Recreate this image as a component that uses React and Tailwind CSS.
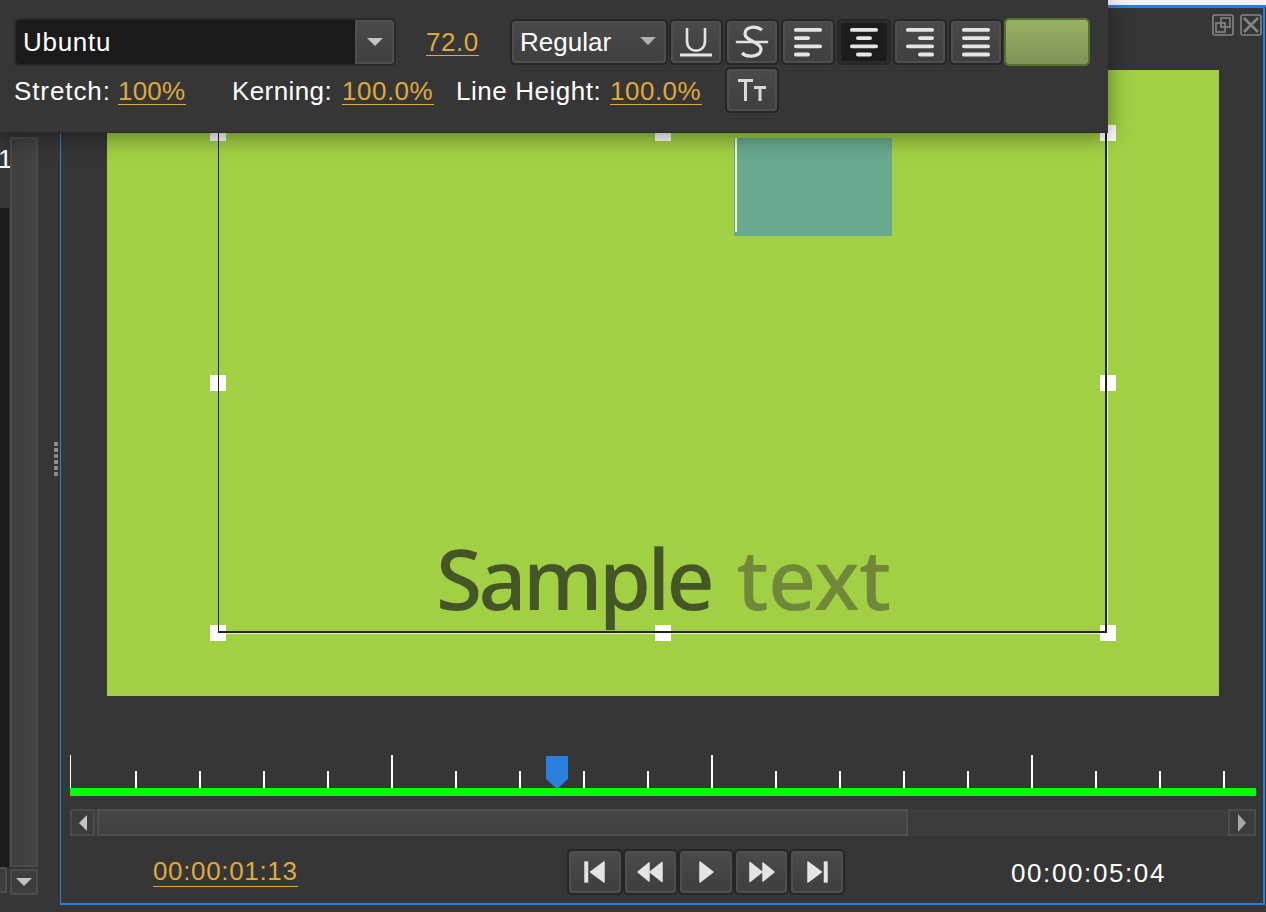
import React from "react";

const F = { fontFamily: '"Liberation Sans", Arial, sans-serif' };

function Btn({ className = "", children }) {
  return (
    <div className={"w-[54px] h-[46px] rounded-[5px] border-[2px] border-[#262626] flex items-center justify-center shrink-0 " + className}>
      {children}
    </div>
  );
}

function Face({ children, dark }) {
  return (
    <div className={"w-full h-full rounded-[4px] border-[2px] flex items-center justify-center " + (dark ? "border-[#2c2c2c] bg-[#1c1c1c]" : "border-[#4f4f4f] bg-gradient-to-b from-[#4a4a4a] to-[#3f3f3f]")}>
      {children}
    </div>
  );
}

function AlignIcon({ widths, align }) {
  const x = (w) => (align === "l" ? 2 : align === "r" ? 30 - w : 16 - w / 2);
  return (
    <svg width="32" height="32" viewBox="0 0 32 32" fill="#e4e4e4">
      {widths.map((w, i) => (
        <rect key={i} x={x(w)} y={2 + i * 8.2} width={w} height="3.8" rx="1.9" />
      ))}
    </svg>
  );
}

function Gold({ children, className = "" }) {
  return <span className={"text-[#dfa93b] border-b border-[#dfa93b] leading-[26px] " + className}>{children}</span>;
}

function Handle({ className }) {
  return <div className={"absolute bg-white " + className} />;
}

function Transport({ children }) {
  return (
    <div className="w-[55.6px] h-[46px] rounded-[5px] border-[2px] border-[#262626] shrink-0">
      <div className="w-full h-full rounded-[4px] border-[2px] border-[#4f4f4f] bg-gradient-to-b from-[#4a4a4a] to-[#3f3f3f] flex items-center justify-center">
        <svg width="28" height="26" viewBox="0 0 28 26" fill="#e4e4e4" stroke="#e4e4e4" strokeWidth="1.5" strokeLinejoin="round">{children}</svg>
      </div>
    </div>
  );
}

const minor = [0, 1, 2, 3, 4, 5, 6, 7, 8, 9, 10, 11, 12, 13, 14, 15, 16, 17, 18, 19];

export default function App() {
  return (
    <div className="relative w-[1266px] h-[912px] overflow-hidden bg-[#363636] text-white" style={F}>
      {/* top-right strip */}
      <div className="absolute left-[1108px] right-0 top-0 h-[7px] bg-[#f4f4f8] border-b-[2px] border-[#2a7fd9]" />

      {/* left dock strip */}
      <div className="absolute left-[-2px] top-[146px] text-[26px] leading-[26px]">1</div>
      <div className="absolute left-0 top-[208px] w-[9px] h-[660px] bg-[#1b1b1b]" />
      <div className="absolute left-0 top-[867px] w-[7px] h-[26px] bg-[#3d3d3d] border-[2px] border-l-0 border-[#4b4b4b]" />
      <div className="absolute left-[10px] top-[137px] w-[28px] h-[730px] border-[2px] border-[#4b4b4b] bg-gradient-to-r from-[#3e3e3e] to-[#444444]" />
      <div className="absolute left-[10px] top-[869px] w-[28px] h-[26px] border-[2px] border-[#4b4b4b] bg-[#3d3d3d] flex items-center justify-center">
        <div className="w-0 h-0 border-l-[8px] border-r-[8px] border-t-[8px] border-l-transparent border-r-transparent border-t-[#c4c4c4]" />
      </div>

      {/* grip */}
      <div className="absolute left-[54px] top-[442px] w-[4px] flex flex-col gap-[2px]">
        {[0, 1, 2, 3, 4, 5].map((i) => (
          <div key={i} className="w-[4px] h-[4px] bg-[#8a8a8a]" />
        ))}
      </div>

      {/* monitor panel */}
      <div className="absolute left-[60px] top-[6px] w-[1205px] h-[899px] border-[2px] border-l-[1px] border-[#2a7fd9]">
        {/* dock buttons */}
        <div className="absolute right-[1px] top-[6px] flex gap-[6px]">
          <svg width="22" height="22" viewBox="0 0 22 22" fill="none" stroke="#858585" strokeWidth="1.6">
            <rect x="1" y="1" width="20" height="20" rx="2" />
            <rect x="9" y="4" width="9" height="9" />
            <rect x="4" y="9" width="9" height="9" />
          </svg>
          <svg width="22" height="22" viewBox="0 0 22 22" fill="none" stroke="#858585" strokeWidth="1.6">
            <rect x="1" y="1" width="20" height="20" rx="2" />
            <path d="M4 4 L18 18 M18 4 L4 18" strokeWidth="2.6" />
          </svg>
        </div>
      </div>

      {/* video frame */}
      <div className="absolute left-[107px] top-[70px] w-[1112px] h-[626px] bg-[#a2d044]">
        <div className="absolute left-[627px] top-[68px] w-[158px] h-[98px] bg-[#69a98f]">
          <div className="absolute left-[1px] top-0 w-[2px] h-[94px] bg-[#fdfdc0]" />
        </div>
        <div
          className="absolute left-[329px] top-[458px] text-[84px] leading-[100px] font-medium whitespace-nowrap text-[#465526] blur-[0.5px]"
          style={{ fontFamily: '"Noto Sans", sans-serif', letterSpacing: "-3.6px", wordSpacing: "7px" }}
        >
          Sample <span className="text-[#71883a]" style={{ letterSpacing: "-0.6px" }}>text</span>
        </div>
        <Handle className="left-[103px] top-[55px] w-[16px] h-[16px]" />
        <Handle className="left-[548px] top-[55px] w-[16px] h-[16px]" />
        <Handle className="left-[993px] top-[55px] w-[16px] h-[16px]" />
        <Handle className="left-[103px] top-[305px] w-[16px] h-[16px]" />
        <Handle className="left-[993px] top-[305px] w-[16px] h-[16px]" />
        <Handle className="left-[103px] top-[555px] w-[16px] h-[16px]" />
        <Handle className="left-[548px] top-[555px] w-[16px] h-[16px]" />
        <Handle className="left-[993px] top-[555px] w-[16px] h-[16px]" />
        {/* selection rectangle */}
        <div className="absolute left-[111px] top-[60px] w-[889px] h-[503px] border-[1px] border-[#222] border-b-[2px] border-r-[2px] shadow-[1px_1px_0_rgba(255,255,255,0.7)]" />
      </div>

      {/* ruler */}
      <div className="absolute left-[70px] top-[755px] w-[1186px] h-[41px]">
        {minor.map((i) => (
          <div
            key={i}
            className={"absolute bottom-[8px] bg-white " + (i % 5 === 0 ? "h-[33px]" : "h-[17px]") + (i === 0 ? " w-[1px]" : " w-[2px]")}
            style={{ left: i === 0 ? 0 : i * 64 + 1 }}
          />
        ))}
        <div className="absolute left-0 right-0 bottom-0 h-[8px] bg-[#00ff00]" />
        <svg className="absolute left-[475px] top-[1px]" width="24" height="33" viewBox="0 0 24 33" fill="#2a80dc">
          <path d="M1 0 H23 V23 L12 33 L1 23 Z" />
        </svg>
      </div>

      {/* scrollbar */}
      <div className="absolute left-[70px] top-[809px] w-[1186px] h-[27px] flex bg-[#3c3c3c]">
        <div className="w-[25px] h-full border-[2px] border-[#4b4b4b] flex items-center justify-center shrink-0">
          <div className="w-0 h-0 border-t-[8px] border-b-[8px] border-r-[8px] border-t-transparent border-b-transparent border-r-[#c4c4c4]" />
        </div>
        <div className="ml-[2px] w-[811px] h-full border-[2px] border-[#4f4f4f] bg-gradient-to-b from-[#464646] to-[#404040]" />
        <div className="flex-1" />
        <div className="w-[28px] h-full border-[2px] border-[#4b4b4b] flex items-center justify-center shrink-0">
          <div className="w-0 h-0 border-t-[9px] border-b-[9px] border-l-[8px] border-t-transparent border-b-transparent border-l-[#a8a8a8]" />
        </div>
      </div>

      {/* transport */}
      <div className="absolute left-[153px] top-[858px] text-[26px] leading-[26px] tracking-[0.65px]">
        <Gold>00:00:01:13</Gold>
      </div>
      <div className="absolute left-[567px] top-[849px] flex">
        <Transport><rect x="4" y="3" width="2.5" height="20" /><path d="M9.5 13 L23 3 V23 Z" /></Transport>
        <Transport><path d="M2 13 L13 4 V22 Z" /><path d="M14 13 L26 3.5 V22.5 Z" /></Transport>
        <Transport><path d="M8 3 L21 13 L8 23 Z" /></Transport>
        <Transport><path d="M2 3.5 L14 13 L2 22.5 Z" /><path d="M15 4 L26 13 L15 22 Z" /></Transport>
        <Transport><path d="M5 3 L18.5 13 L5 23 Z" /><rect x="21.5" y="3" width="2.5" height="20" /></Transport>
      </div>
      <div className="absolute left-[1011px] top-[860px] text-[26px] leading-[26px] tracking-[1.6px]">00:00:05:04</div>

      {/* text toolbar overlay */}
      <div className="absolute left-0 top-0 w-[1108px] h-[133px] bg-[#363636] border-b border-[#2a2a2a] shadow-[0_3px_22px_rgba(0,0,0,0.45)] pt-[18px] pl-[14px] text-[26px]">
        <div className="flex items-center h-[48px]">
          <div className="w-[382px] h-[48px] rounded-[5px] border-[2px] border-[#2a2a2a] flex overflow-hidden">
            <div className="w-[339px] bg-[#1a1a1a] pl-[7px] leading-[44px] tracking-[0.7px]">Ubuntu</div>
            <div className="flex-1 rounded-r-[4px] border-[2px] border-[#4f4f4f] bg-gradient-to-b from-[#4a4a4a] to-[#3f3f3f] flex items-center justify-center">
              <div className="w-0 h-0 border-l-[8px] border-r-[8px] border-t-[8px] border-l-transparent border-r-transparent border-t-[#c4c4c4]" />
            </div>
          </div>
          <div className="ml-[30px] w-[84px] flex tracking-[0.5px]">
            <Gold>72.0</Gold>
          </div>
          <Btn className="!w-[158px]">
            <div className="w-full h-full rounded-[4px] border-[2px] border-[#4f4f4f] bg-gradient-to-b from-[#4a4a4a] to-[#3f3f3f] flex items-center justify-between pl-[6px] pr-[8px]">
              <span>Regular</span>
              <div className="w-0 h-0 border-l-[8px] border-r-[8px] border-t-[8px] border-l-transparent border-r-transparent border-t-[#b0b0b0] -mt-[2px]" />
            </div>
          </Btn>
          <Btn className="ml-[1px]"><Face>
            <svg width="32" height="36" viewBox="0 0 32 36" fill="none" stroke="#e4e4e4" strokeWidth="2.6">
              <path d="M7 4 V17 C7 30 25 30 25 17 V4" />
              <path d="M1 31 H31" strokeWidth="3.2" strokeLinecap="round" />
            </svg>
          </Face></Btn>
          <Btn className="ml-[2px]"><Face>
            <svg width="34" height="36" viewBox="0 0 34 36" fill="none" stroke="#e4e4e4" strokeWidth="3.2">
              <path d="M27 6 C20 1 10 3 10 10 C10 17 26 18 26 25 C26 33 12 34 7 29" />
              <path d="M2 18 H32" strokeWidth="2.6" strokeLinecap="round" />
            </svg>
          </Face></Btn>
          <Btn className="ml-[2px]"><Face><AlignIcon widths={[28, 16, 28, 16]} align="l" /></Face></Btn>
          <Btn className="ml-[2px]"><Face dark><AlignIcon widths={[28, 16, 28, 16]} align="c" /></Face></Btn>
          <Btn className="ml-[2px]"><Face><AlignIcon widths={[28, 16, 28, 16]} align="r" /></Face></Btn>
          <Btn className="ml-[2px]"><Face><AlignIcon widths={[28, 28, 28, 28]} align="l" /></Face></Btn>
          <div className="ml-[1px] w-[86px] h-[48px] rounded-[5px] border-[2px] border-[#56702e] p-0">
            <div className="w-full h-full rounded-[3px] bg-gradient-to-b from-[#98b062] to-[#7e9458]" />
          </div>
        </div>
        <div className="flex items-start h-[48px] mt-[2px]">
          <div className="flex items-center h-[46px] whitespace-nowrap">
            <span className="w-[96px] tracking-[0.9px]">Stretch:</span>
            <Gold className="ml-[8px] w-[68px] tracking-[0.2px]">100%</Gold>
            <span className="ml-[46px] w-[101px] tracking-[0.4px]">Kerning:</span>
            <Gold className="ml-[9px] w-[92px] tracking-[0.5px]">100.0%</Gold>
            <span className="ml-[22px] w-[145px] tracking-[0.55px]">Line Height:</span>
            <Gold className="ml-[9px] w-[92px] tracking-[0.5px]">100.0%</Gold>
          </div>
          <Btn className="absolute left-[725px] top-[67px]"><Face>
            <svg width="32" height="28" viewBox="0 0 32 28" fill="#d8d8d8">
              <path d="M2 3 H17 V6 H11 V25 H8 V6 H2 Z" />
              <path d="M18 10 H30 V13 H25.5 V25 H22.5 V13 H18 Z" />
            </svg>
          </Face></Btn>
        </div>
      </div>
    </div>
  );
}
